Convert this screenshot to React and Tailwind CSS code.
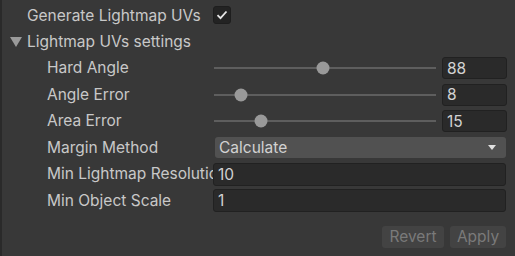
import React from "react";

const font = { fontFamily: "Inter, 'Noto Sans', sans-serif" };

function Slider({ pos, value }) {
  return (
    <div className="flex items-center h-full">
      <div className="relative w-[222px] h-full ml-[1px]">
        <div className="absolute left-0 right-0 top-1/2 -translate-y-1/2 h-[2px] bg-[#5e5e5e]" />
        <div
          className="absolute top-1/2 w-[13px] h-[13px] rounded-full bg-[#999999] -translate-x-1/2 -translate-y-1/2"
          style={{ left: pos }}
        />
      </div>
      <div className="ml-[6px] w-[65px] h-[22px] rounded-[3px] bg-[#2a2a2a] border border-[#212121] flex items-center pl-[4px] text-[#d2d2d2]">
        {value}
      </div>
    </div>
  );
}

function Row({ label, children }) {
  return (
    <div className="flex items-center h-[26.5px]">
      <div className="w-[211px] pl-[45px] shrink-0 overflow-hidden whitespace-nowrap leading-[22px] text-[#c8c8c8]">
        {label}
      </div>
      <div className="flex-1 h-full flex items-center">{children}</div>
    </div>
  );
}

export default function App() {
  return (
    <div
      className="w-[515px] h-[256px] bg-[#383838] border-l-2 border-[#2a2a2a] text-[15.5px] leading-none flex flex-col pt-[2px] pr-[8px] overflow-hidden"
      style={font}
    >
      <div className="flex items-center h-[26.5px]">
        <div className="w-[211px] pl-[25px] text-[#c8c8c8] whitespace-nowrap">Generate Lightmap UVs</div>
        <div className="w-[18px] h-[18px] rounded-[3px] bg-[#232323] border border-[#1e1e1e] flex items-center justify-center">
          <svg width="12" height="10" viewBox="0 0 12 10">
            <path d="M1.5 5.2 L4.5 8.2 L10.5 1.5" fill="none" stroke="#e6e6e6" strokeWidth="1.8" />
          </svg>
        </div>
      </div>
      <div className="flex items-center h-[26.5px]">
        <svg width="12" height="10" viewBox="0 0 12 10" className="ml-[8px] mr-[5px]">
          <path d="M0 0 L12 0 L6 10 Z" fill="#9a9a9a" />
        </svg>
        <span className="text-[#c8c8c8] whitespace-nowrap">Lightmap UVs settings</span>
      </div>
      <Row label="Hard Angle">
        <Slider pos={109} value="88" />
      </Row>
      <Row label="Angle Error">
        <Slider pos={27} value="8" />
      </Row>
      <Row label="Area Error">
        <Slider pos={47} value="15" />
      </Row>
      <Row label="Margin Method">
        <div className="ml-[2px] w-[291px] h-[21px] rounded-[3px] bg-[#515151] flex items-center justify-between pl-[4px] pr-[10px] text-[#d2d2d2]">
          <span>Calculate</span>
          <svg width="8" height="5" viewBox="0 0 8 5">
            <path d="M0 0 L8 0 L4 5 Z" fill="#e0e0e0" />
          </svg>
        </div>
      </Row>
      <Row label="Min Lightmap Resolution">
        <div className="w-[293px] h-[23px] rounded-[3px] bg-[#2a2a2a] border border-[#212121] flex items-center pl-[4px] text-[#d2d2d2]">
          10
        </div>
      </Row>
      <Row label="Min Object Scale">
        <div className="w-[293px] h-[23px] rounded-[3px] bg-[#2a2a2a] border border-[#212121] flex items-center pl-[4px] text-[#d2d2d2]">
          1
        </div>
      </Row>
      <div className="flex justify-end gap-[6px] mt-[12px] pr-[1px]">
        <div className="w-[62px] h-[22px] rounded-[3px] bg-[#434343] flex items-center justify-center text-[#7a7a7a]">
          Revert
        </div>
        <div className="w-[56px] h-[22px] rounded-[3px] bg-[#434343] flex items-center justify-center text-[#7a7a7a]">
          Apply
        </div>
      </div>
    </div>
  );
}
